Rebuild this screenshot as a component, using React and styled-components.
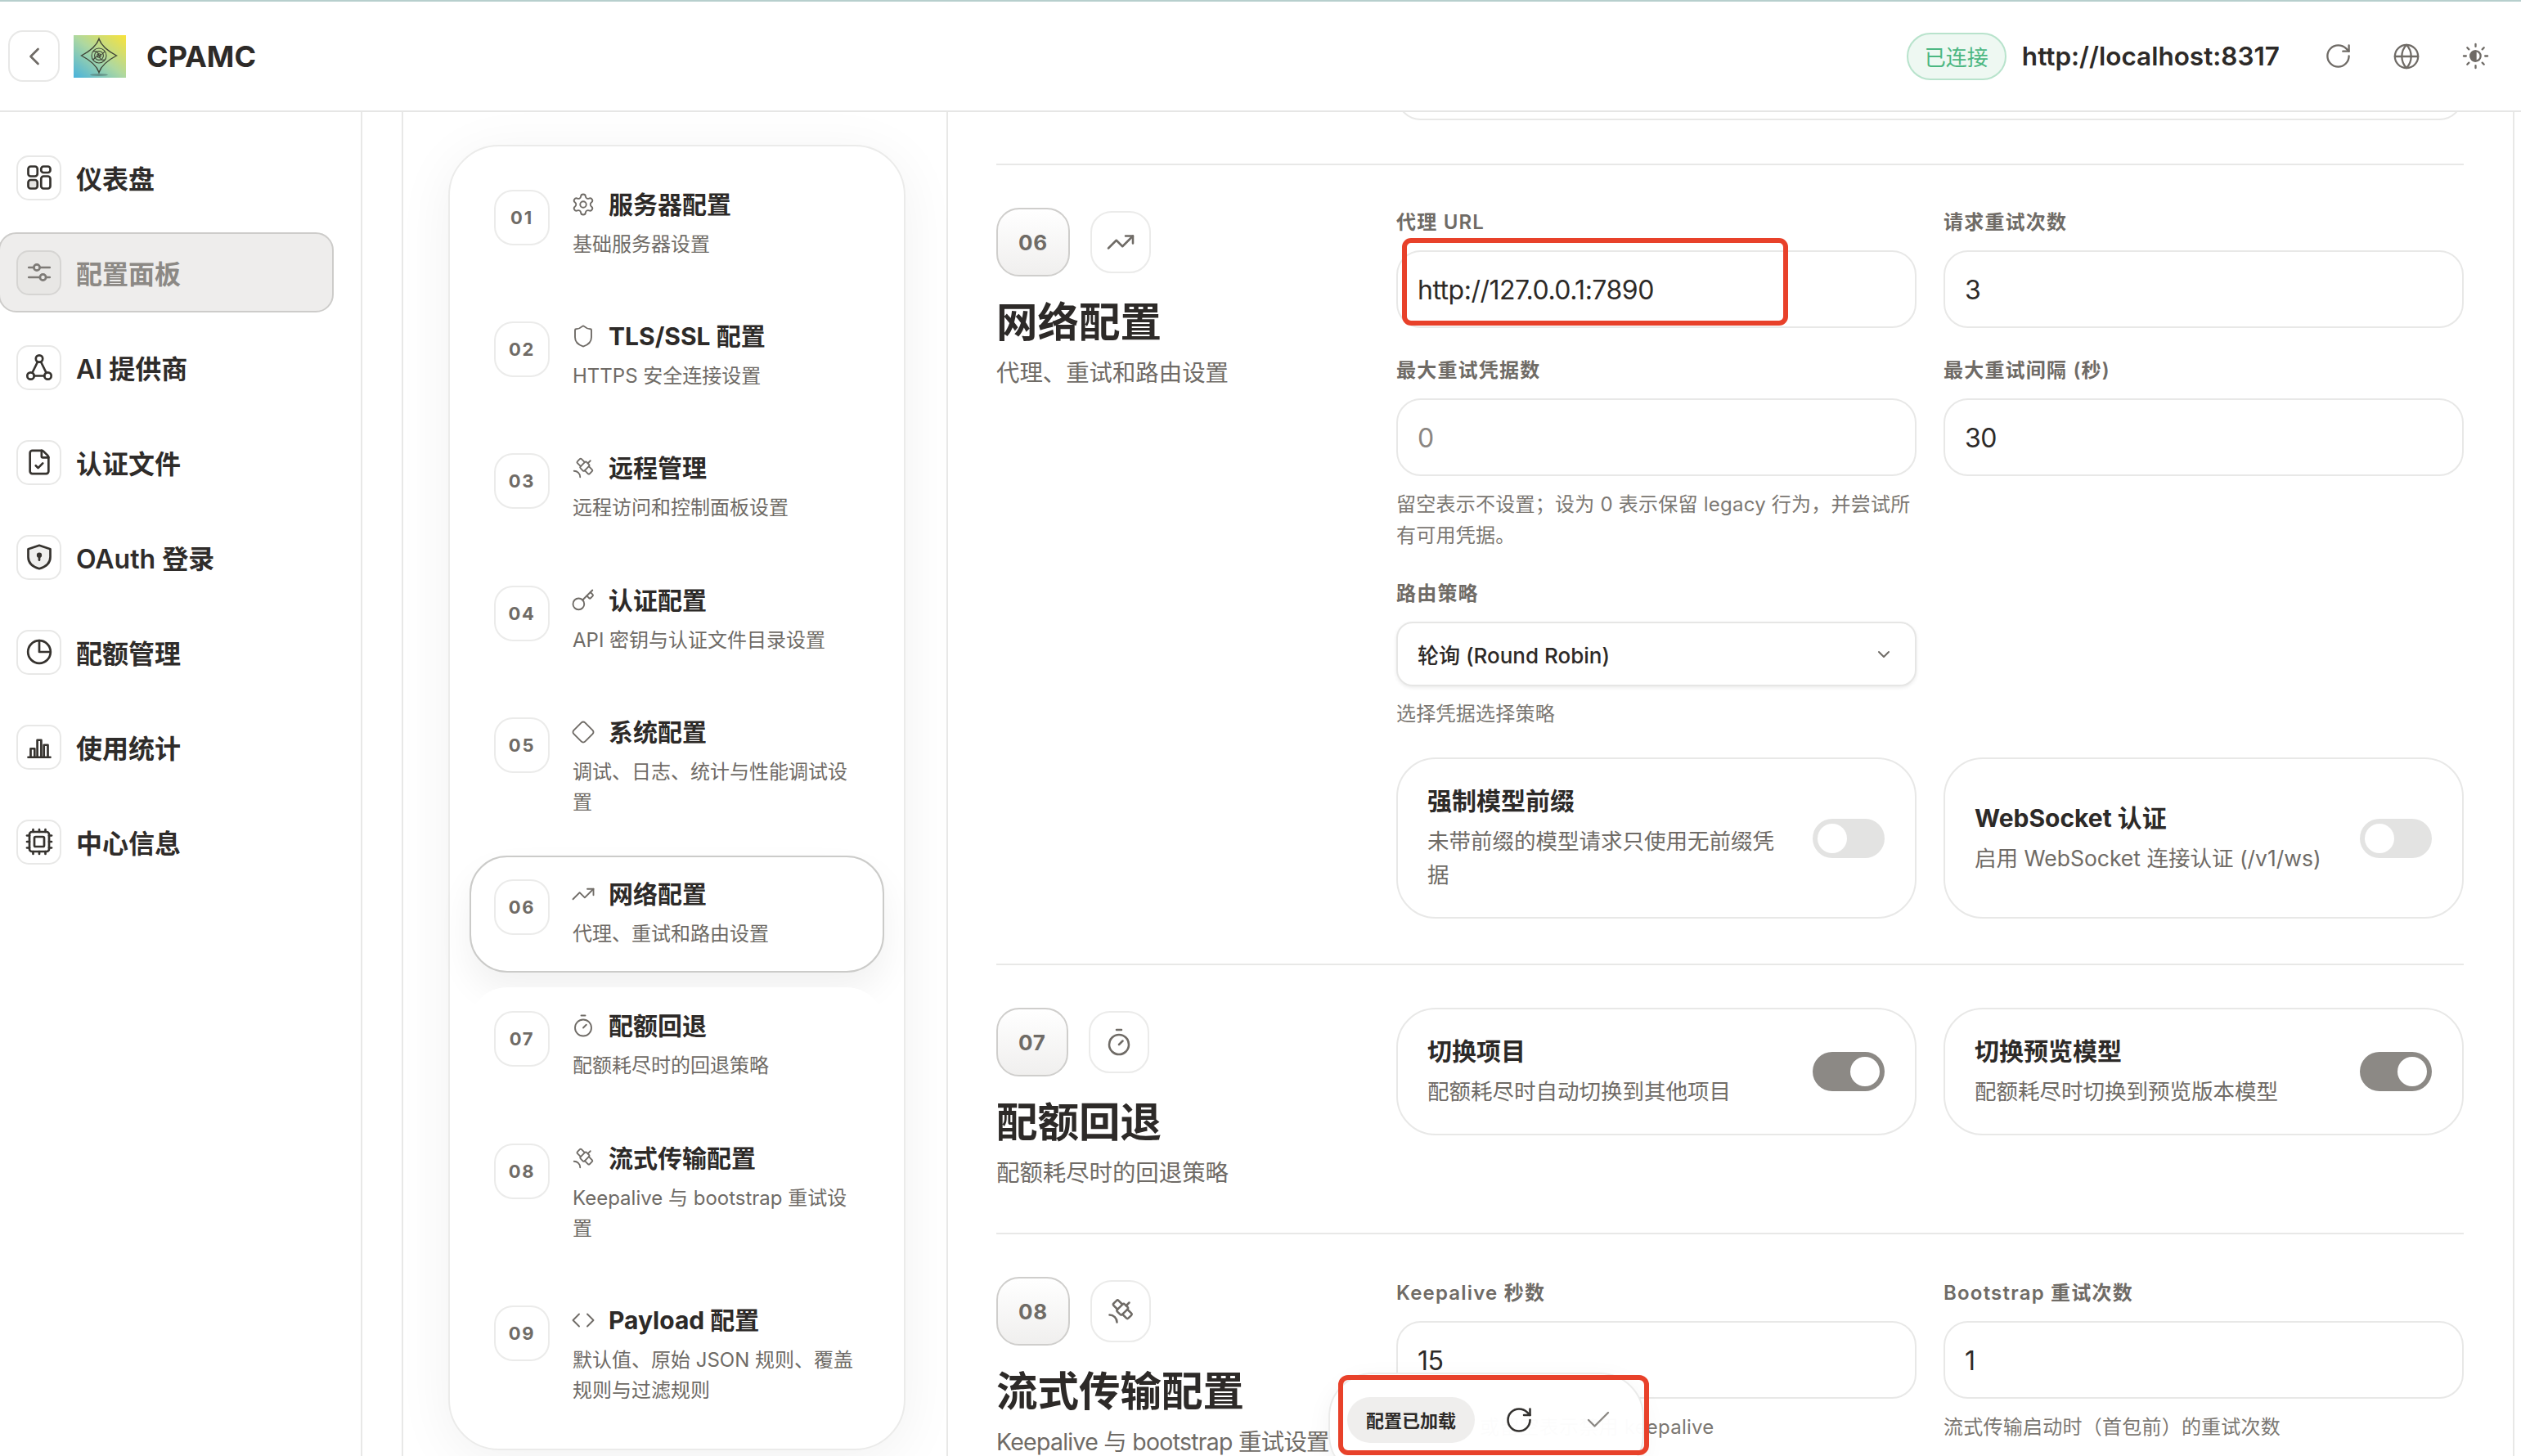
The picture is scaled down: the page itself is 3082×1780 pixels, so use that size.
import styled, { createGlobalStyle } from 'styled-components'
import {
  ChevronLeft,
  RotateCw,
  Globe,
  FileCheck,
  Cpu,
  Settings,
  Shield,
  Satellite,
  Key,
  Diamond,
  TrendingUp,
  Timer,
  Code,
  ChevronDown,
  Check,
} from 'lucide-react'

const GlobalStyle = createGlobalStyle`
  * { box-sizing: border-box; }
  html, body {
    margin: 0;
    height: 100%;
    background: #ffffff;
    overflow: hidden;
  }
  body {
    font-family: Inter, "Noto Sans CJK SC", sans-serif;
    color: #2d2a28;
  }
`

// Page frame

const Page = styled.div`
  width: 3082px;
  height: 1780px;
  display: flex;
  flex-direction: column;
  overflow: hidden;
`

const Header = styled.header`
  height: 137px;
  flex: none;
  display: flex;
  align-items: center;
  padding: 0 14px 0 10px;
  border-top: 2px solid #b7cfcd;
  border-bottom: 2px solid #e6e6e5;
`

const BackButton = styled.button`
  width: 63px;
  height: 63px;
  display: flex;
  align-items: center;
  justify-content: center;
  background: #fff;
  border: 2px solid #e8e8e7;
  border-radius: 18px;
  color: #6f6b66;
  padding: 0;
`

const BrandTitle = styled.div`
  margin-left: 25px;
  font-size: 36px;
  font-weight: 700;
  color: #2d2a28;
`

const HeaderRight = styled.div`
  margin-left: auto;
  display: flex;
  align-items: center;
`

const StatusPill = styled.div`
  height: 58px;
  padding: 0 20px;
  display: flex;
  align-items: center;
  border: 2px solid #b8e3cc;
  background: #eef8f2;
  border-radius: 29px;
  font-size: 26px;
  color: #4cb782;
`

const ServerUrl = styled.div`
  margin: 0 29px 0 19px;
  font-size: 31.5px;
  font-weight: 600;
  color: #2d2a28;
  white-space: nowrap;
`

const HeaderIcon = styled.span`
  width: 84px;
  display: flex;
  justify-content: center;
  color: #6f6b66;
`

const Body = styled.div`
  flex: 1;
  min-height: 0;
  display: flex;
`

// Left sidebar

const Sidebar = styled.nav`
  width: 443px;
  flex: none;
  padding-top: 31px;
  display: flex;
  flex-direction: column;
  gap: 18px;
  border-right: 2px solid #e8e8e7;
`

const SideItem = styled.div`
  width: 410px;
  height: 98px;
  margin-left: -2px;
  padding-left: 20px;
  display: flex;
  align-items: center;
  gap: 18px;
  border: 2px solid ${(p) => (p.$active ? '#cdccca' : 'transparent')};
  border-radius: 22px;
  background: ${(p) => (p.$active ? '#eeedec' : 'transparent')};
  color: ${(p) => (p.$active ? '#8c8985' : '#2f2c2a')};
  font-size: 32px;
  font-weight: 600;
`

const SideIcon = styled.span`
  width: 55px;
  height: 55px;
  flex: none;
  display: flex;
  align-items: center;
  justify-content: center;
  border: 2px solid ${(p) => (p.$active ? '#d6d5d3' : '#e8e8e7')};
  border-radius: 15px;
  background: ${(p) => (p.$active ? '#e8e7e5' : '#fff')};
  color: ${(p) => (p.$active ? '#7d7a76' : '#36332f')};
`

// Main panel

const Panel = styled.main`
  flex: 1;
  min-width: 0;
  margin: 0 8px 0 48px;
  display: flex;
  border-left: 2px solid #e8e8e7;
  border-right: 2px solid #e8e8e7;
  overflow: hidden;
`

const NavColumn = styled.aside`
  width: 666px;
  flex: none;
  padding: 40px 0 0 55px;
  border-right: 2px solid #e8e8e7;
  overflow: hidden;
`

const NavCard = styled.div`
  width: 559px;
  padding: 24px;
  display: flex;
  flex-direction: column;
  gap: 18px;
  background: #fff;
  border: 2px solid #ebebea;
  border-radius: 62px;
  box-shadow: 0 12px 70px rgba(0, 0, 0, 0.06);
`

const NavItem = styled.div`
  padding: 27px;
  display: flex;
  gap: 30px;
  border: 2px solid ${(p) => (p.$active ? '#cbcbc9' : 'transparent')};
  border-radius: 46px;
  background: #fff;
  box-shadow: ${(p) => (p.$active ? '0 22px 44px rgba(0, 0, 0, 0.06)' : 'none')};
`

const NavNumber = styled.span`
  width: 68px;
  height: 68px;
  flex: none;
  margin-left: 1px;
  display: flex;
  align-items: center;
  justify-content: center;
  border: 2px solid #ebebea;
  border-radius: 23px;
  background: #fff;
  font-size: 22px;
  font-weight: 700;
  letter-spacing: 0.08em;
  color: #6f6b66;
`

const NavText = styled.div`
  flex: 1;
  min-width: 0;
  margin-left: -2px;
`

const NavTitle = styled.div`
  height: 36px;
  display: flex;
  align-items: center;
  gap: 16px;
  font-size: 30px;
  font-weight: 700;
  line-height: 36px;
  color: #2d2a28;

  svg {
    margin-left: -2px;
    color: #6f6b66;
    flex: none;
  }
`

const NavDesc = styled.div`
  margin-top: 12px;
  font-size: 24px;
  line-height: 37.2px;
  color: #6f6b66;
`

const Content = styled.div`
  flex: 1;
  min-width: 0;
  padding: 0 60px 0 59px;
  overflow: hidden;
`

const PrevFieldClip = styled.div`
  height: 10px;
  margin: 0 0 53px 489px;
  overflow: hidden;
  display: flex;
  flex-direction: column;
  justify-content: flex-end;
`

const PrevField = styled.div`
  height: 95px;
  flex: none;
  border: 2px solid #e8e8e7;
  border-radius: 30px;
`

const Section = styled.section`
  display: grid;
  grid-template-columns: 489px 1fr;
  padding: 52px 0;
  border-top: 2px solid #e8e8e7;
`

const SectionHead = styled.div`
  min-width: 0;
`

const SectionBadges = styled.div`
  display: flex;
  align-items: center;
  gap: 25px;
`

const SectionNumber = styled.span`
  height: 84px;
  padding: 0 25px;
  display: flex;
  align-items: center;
  border: 2px solid #cfcecc;
  border-radius: 28px;
  background: linear-gradient(180deg, #ffffff 0%, #f0efee 100%);
  font-size: 26px;
  font-weight: 700;
  letter-spacing: 0.03em;
  color: #6f6b66;
`

const SectionIcon = styled.span`
  width: 74px;
  height: 76px;
  display: flex;
  align-items: center;
  justify-content: center;
  border: 2px solid #ebebea;
  border-radius: 26px;
  background: #fff;
  color: #6f6b66;
`

const SectionTitle = styled.h2`
  margin: 26px 0 0;
  font-size: 50.5px;
  line-height: 60px;
  font-weight: 700;
  color: #2d2a28;
  white-space: nowrap;
`

const SectionDesc = styled.p`
  margin: 11px 0 0;
  font-size: 28.4px;
  line-height: 42px;
  letter-spacing: ${(p) => (p.$tight ? '-0.7px' : '0')};
  color: #6f6b66;
  white-space: nowrap;
`

const FormGrid = styled.div`
  display: grid;
  grid-template-columns: 1fr 1fr;
  gap: 34px 33px;
  align-items: start;
  padding: ${(p) => p.$top || 0}px 0 ${(p) => p.$bottom || 0}px;
`

const FieldWrap = styled.div`
  min-width: 0;
`

const Label = styled.label`
  display: block;
  margin-bottom: 16px;
  font-size: 24px;
  line-height: 36px;
  font-weight: 600;
  letter-spacing: 0.05em;
  color: #6f6b66;
`

const InputBox = styled.div`
  position: relative;
  height: 95px;
  padding: 2px 24px 0;
  display: flex;
  align-items: center;
  border: 2px solid #e8e8e7;
  border-radius: 30px;
  background: #fff;
  font-size: 32px;
  letter-spacing: -0.5px;
  color: ${(p) => (p.$placeholder ? '#8a8682' : '#2d2a28')};
`

const SelectBox = styled.div`
  height: 79px;
  padding: 0 26px 0 24px;
  display: flex;
  align-items: center;
  justify-content: space-between;
  border: 2px solid #e6e6e5;
  border-radius: 20px;
  background: #fff;
  box-shadow: 0 2px 4px rgba(0, 0, 0, 0.08);
  font-size: 26px;
  font-weight: 500;
  color: #2d2a28;

  svg {
    color: #6f6b66;
  }
`

const Hint = styled.div`
  margin-top: ${(p) => p.$gap || 16}px;
  font-size: 24px;
  line-height: 38px;
  letter-spacing: 0.01em;
  color: #7b7772;
`

const ToggleCard = styled.div`
  display: flex;
  align-items: center;
  gap: 30px;
  min-height: ${(p) => p.$height}px;
  padding: 0 37px 0 36px;
  border: 2px solid #e8e8e7;
  border-radius: 48px;
  background: #fff;
`

const ToggleText = styled.div`
  flex: 1;
  min-width: 0;
`

const ToggleTitle = styled.div`
  font-size: 30px;
  line-height: 40px;
  font-weight: 700;
  color: #2d2a28;
`

const ToggleDesc = styled.div`
  margin-top: 9px;
  font-size: 26.5px;
  line-height: 41px;
  color: #6f6b66;
`

const Switch = styled.span`
  width: 88px;
  height: 48px;
  flex: none;
  padding: 6px;
  display: flex;
  justify-content: ${(p) => (p.$on ? 'flex-end' : 'flex-start')};
  border-radius: 24px;
  background: ${(p) => (p.$on ? '#8c8985' : '#e3e3e2')};

  &::after {
    content: '';
    width: 36px;
    height: 36px;
    border-radius: 50%;
    background: #fff;
  }
`

// Annotations and floating bar

const RedFrame = styled.div`
  position: absolute;
  top: -17px;
  left: 5px;
  width: 472px;
  height: 107px;
  border: 6px solid #e8412a;
  border-radius: 11px;
`

const FloatingBar = styled.div`
  position: fixed;
  left: 1624px;
  top: 1678px;
  width: 386px;
  height: 130px;
  padding: 28px 0 0 21px;
  display: flex;
  align-items: flex-start;
  border: 2px solid #ebebea;
  border-radius: 54px;
  background: rgba(255, 255, 255, 0.98);
  box-shadow: 0 8px 30px rgba(0, 0, 0, 0.05);
`

const BarChip = styled.span`
  height: 56px;
  width: 156px;
  flex: none;
  margin-right: 5px;
  padding-bottom: 2px;
  display: flex;
  align-items: center;
  justify-content: center;
  border-radius: 28px;
  background: #efeeed;
  font-size: 22px;
  font-weight: 600;
  color: #2d2a28;
`

const BarButton = styled.span`
  width: 97px;
  height: 56px;
  display: flex;
  align-items: center;
  justify-content: center;
  color: ${(p) => (p.$muted ? '#8c8985' : '#33312f')};
`

const BarFrame = styled.div`
  position: fixed;
  left: 1636px;
  top: 1681px;
  width: 380px;
  height: 98px;
  border: 6px solid #e8412a;
  border-radius: 12px;
`

// Drawings

const Logo = () => (
  <svg width="64" height="52" viewBox="0 0 64 52" style={{ marginLeft: 17, flex: 'none' }}>
    <defs>
      <linearGradient id="logoBg" x1="0" y1="1" x2="1" y2="0">
        <stop offset="0" stopColor="#48b2dc" />
        <stop offset="0.5" stopColor="#aed8a0" />
        <stop offset="1" stopColor="#f9e33a" />
      </linearGradient>
    </defs>
    <rect width="64" height="52" fill="url(#logoBg)" />
    <ellipse cx="31" cy="48.5" rx="11" ry="1.4" fill="#4c6b66" opacity="0.55" />
    <path
      d="M31 4.5C33.5 12 41 19 52.5 25C41 31 33.5 38 31 45.5C28.5 38 21 31 9.5 25C21 19 28.5 12 31 4.5Z"
      fill="none"
      stroke="#3f4336"
      strokeWidth="1.4"
    />
    <g fill="none" stroke="#3f4336" strokeWidth="1.1">
      <circle cx="31" cy="25" r="9" />
      <circle cx="31" cy="25" r="5.4" />
      <circle cx="31" cy="25" r="2.2" />
      <path d="M24 20c3-1 6 0 7 5M38 20c-2 3-4 4-7 5M38 30c-3 1-6 0-7-5M24 30c2-3 4-4 7-5" />
    </g>
  </svg>
)

const IconBase = ({ size = 36, children, stroke = 1.8 }) => (
  <svg
    width={size}
    height={size}
    viewBox="0 0 24 24"
    fill="none"
    stroke="currentColor"
    strokeWidth={stroke}
    strokeLinecap="round"
    strokeLinejoin="round"
  >
    {children}
  </svg>
)

const DashIcon = () => (
  <IconBase>
    <rect x="3" y="3" width="7.5" height="8" rx="2" />
    <rect x="13.5" y="3" width="7.5" height="5" rx="2" />
    <rect x="13.5" y="11" width="7.5" height="10" rx="2" />
    <rect x="3" y="14" width="7.5" height="7" rx="2" fill="#e5e4e2" />
  </IconBase>
)

const SlidersIcon = () => (
  <IconBase>
    <path d="M3.5 8h17M3.5 16h17" />
    <circle cx="10" cy="8" r="2.4" fill="#e8e7e5" />
    <circle cx="15" cy="16" r="2.4" fill="#e8e7e5" />
  </IconBase>
)

const NetworkIcon = () => (
  <IconBase>
    <circle cx="12" cy="5" r="2.8" />
    <circle cx="5" cy="19" r="2.8" />
    <circle cx="19" cy="19" r="2.8" />
    <path d="M10.7 7.5L6.3 16.5M13.3 7.5L17.7 16.5M7.8 19h8.4" />
  </IconBase>
)

const KeyholeIcon = () => (
  <IconBase>
    <path d="M12 2.5l9 3v6.5c0 4.8-3.8 8-9 9.5-5.2-1.5-9-4.7-9-9.5V5.5z" fill="#efefee" />
    <circle cx="12" cy="10.5" r="1.2" fill="currentColor" />
    <path d="M12 11v3.5" />
  </IconBase>
)

const PieIcon = () => (
  <IconBase>
    <circle cx="12" cy="12" r="9.2" />
    <path d="M12 2.8V12h9.2" />
  </IconBase>
)

const BarsIcon = () => (
  <IconBase>
    <path d="M3 20.5h18" />
    <path d="M5 20.5v-7h3.2v7M10.4 20.5V6.5h3.2v14M15.8 20.5v-10H19v10" />
  </IconBase>
)

const SunIcon = () => (
  <IconBase size={35} stroke={1.6}>
    <circle cx="12" cy="12" r="4.2" />
    <path d="M12 7.8a4.2 4.2 0 0 1 0 8.4z" fill="currentColor" transform="matrix(-1 0 0 1 24 0)" />
    <path d="M12 2v2M12 20v2M2 12h2M20 12h2M5 5l1.4 1.4M17.6 17.6L19 19M5 19l1.4-1.4M17.6 6.4L19 5" />
  </IconBase>
)

// Data

const sideItems = [
  { label: '仪表盘', icon: <DashIcon /> },
  { label: '配置面板', icon: <SlidersIcon />, active: true },
  { label: 'AI 提供商', icon: <NetworkIcon /> },
  { label: '认证文件', icon: <FileCheck size={34} strokeWidth={1.9} /> },
  { label: 'OAuth 登录', icon: <KeyholeIcon /> },
  { label: '配额管理', icon: <PieIcon /> },
  { label: '使用统计', icon: <BarsIcon /> },
  { label: '中心信息', icon: <Cpu size={36} strokeWidth={1.8} /> },
]

const navItems = [
  { no: '01', Icon: Settings, title: '服务器配置', desc: '基础服务器设置' },
  { no: '02', Icon: Shield, title: 'TLS/SSL 配置', desc: 'HTTPS 安全连接设置' },
  { no: '03', Icon: Satellite, title: '远程管理', desc: '远程访问和控制面板设置' },
  { no: '04', Icon: Key, title: '认证配置', desc: 'API 密钥与认证文件目录设置' },
  { no: '05', Icon: Diamond, title: '系统配置', desc: '调试、日志、统计与性能调试设置' },
  { no: '06', Icon: TrendingUp, title: '网络配置', desc: '代理、重试和路由设置', active: true },
  { no: '07', Icon: Timer, title: '配额回退', desc: '配额耗尽时的回退策略' },
  { no: '08', Icon: Satellite, title: '流式传输配置', desc: 'Keepalive 与 bootstrap 重试设置' },
  { no: '09', Icon: Code, title: 'Payload 配置', desc: '默认值、原始 JSON 规则、覆盖规则与过滤规则' },
]

const SectionHeading = ({ no, Icon, title, desc, tight }) => (
  <SectionHead>
    <SectionBadges>
      <SectionNumber>{no}</SectionNumber>
      <SectionIcon>
        <Icon size={36} strokeWidth={1.7} />
      </SectionIcon>
    </SectionBadges>
    <SectionTitle>{title}</SectionTitle>
    <SectionDesc $tight={tight}>{desc}</SectionDesc>
  </SectionHead>
)

const Field = ({ label, value, placeholder, hint, children }) => (
  <FieldWrap>
    <Label>{label}</Label>
    <InputBox $placeholder={placeholder}>
      {value}
      {children}
    </InputBox>
    {hint && <Hint>{hint}</Hint>}
  </FieldWrap>
)

const ToggleField = ({ title, desc, on, height }) => (
  <ToggleCard $height={height}>
    <ToggleText>
      <ToggleTitle>{title}</ToggleTitle>
      <ToggleDesc>{desc}</ToggleDesc>
    </ToggleText>
    <Switch $on={on} />
  </ToggleCard>
)

export default function App() {
  return (
    <Page>
      <GlobalStyle />
      <Header>
        <BackButton>
          <ChevronLeft size={36} strokeWidth={1.8} />
        </BackButton>
        <Logo />
        <BrandTitle>CPAMC</BrandTitle>
        <HeaderRight>
          <StatusPill>已连接</StatusPill>
          <ServerUrl>http://localhost:8317</ServerUrl>
          <HeaderIcon>
            <RotateCw size={35} strokeWidth={1.6} />
          </HeaderIcon>
          <HeaderIcon>
            <Globe size={34} strokeWidth={1.6} />
          </HeaderIcon>
          <HeaderIcon>
            <SunIcon />
          </HeaderIcon>
        </HeaderRight>
      </Header>

      <Body>
        <Sidebar>
          {sideItems.map((item) => (
            <SideItem key={item.label} $active={item.active}>
              <SideIcon $active={item.active}>{item.icon}</SideIcon>
              {item.label}
            </SideItem>
          ))}
        </Sidebar>

        <Panel>
          <NavColumn>
            <NavCard>
              {navItems.map(({ no, Icon, title, desc, active }) => (
                <NavItem key={no} $active={active}>
                  <NavNumber>{no}</NavNumber>
                  <NavText>
                    <NavTitle>
                      <Icon size={30} strokeWidth={1.5} />
                      {title}
                    </NavTitle>
                    <NavDesc>{desc}</NavDesc>
                  </NavText>
                </NavItem>
              ))}
            </NavCard>
          </NavColumn>

          <Content>
            <PrevFieldClip>
              <PrevField />
            </PrevFieldClip>

            <Section>
              <SectionHeading no="06" Icon={TrendingUp} title="网络配置" desc="代理、重试和路由设置" />
              <FormGrid $bottom={3}>
                <Field label="代理 URL" value="http://127.0.0.1:7890">
                  <RedFrame />
                </Field>
                <Field label="请求重试次数" value="3" />
                <Field
                  label="最大重试凭据数"
                  value="0"
                  placeholder
                  hint="留空表示不设置；设为 0 表示保留 legacy 行为，并尝试所有可用凭据。"
                />
                <Field label="最大重试间隔 (秒)" value="30" />
                <FieldWrap>
                  <Label>路由策略</Label>
                  <SelectBox>
                    轮询 (Round Robin)
                    <ChevronDown size={24} strokeWidth={2} />
                  </SelectBox>
                  <Hint $gap={15}>选择凭据选择策略</Hint>
                </FieldWrap>
                <span />
                <ToggleField height={197} title="强制模型前缀" desc="未带前缀的模型请求只使用无前缀凭据" />
                <ToggleField height={197} title="WebSocket 认证" desc="启用 WebSocket 连接认证 (/v1/ws)" />
              </FormGrid>
            </Section>

            <Section>
              <SectionHeading no="07" Icon={Timer} title="配额回退" desc="配额耗尽时的回退策略" />
              <FormGrid>
                <ToggleField height={156} on title="切换项目" desc="配额耗尽时自动切换到其他项目" />
                <ToggleField height={156} on title="切换预览模型" desc="配额耗尽时切换到预览版本模型" />
              </FormGrid>
            </Section>

            <Section>
              <SectionHeading
                no="08"
                Icon={Satellite}
                title="流式传输配置"
                desc="Keepalive 与 bootstrap 重试设置"
                tight
              />
              <FormGrid $top={2}>
                <Field label="Keepalive 秒数" value="15" hint="设置为 0 或留空表示禁用 keepalive" />
                <Field label="Bootstrap 重试次数" value="1" hint="流式传输启动时（首包前）的重试次数" />
              </FormGrid>
            </Section>
          </Content>
        </Panel>
      </Body>

      <FloatingBar>
        <BarChip>配置已加载</BarChip>
        <BarButton>
          <RotateCw size={36} strokeWidth={1.7} />
        </BarButton>
        <BarButton $muted>
          <Check size={36} strokeWidth={1.6} />
        </BarButton>
      </FloatingBar>
      <BarFrame />
    </Page>
  )
}
